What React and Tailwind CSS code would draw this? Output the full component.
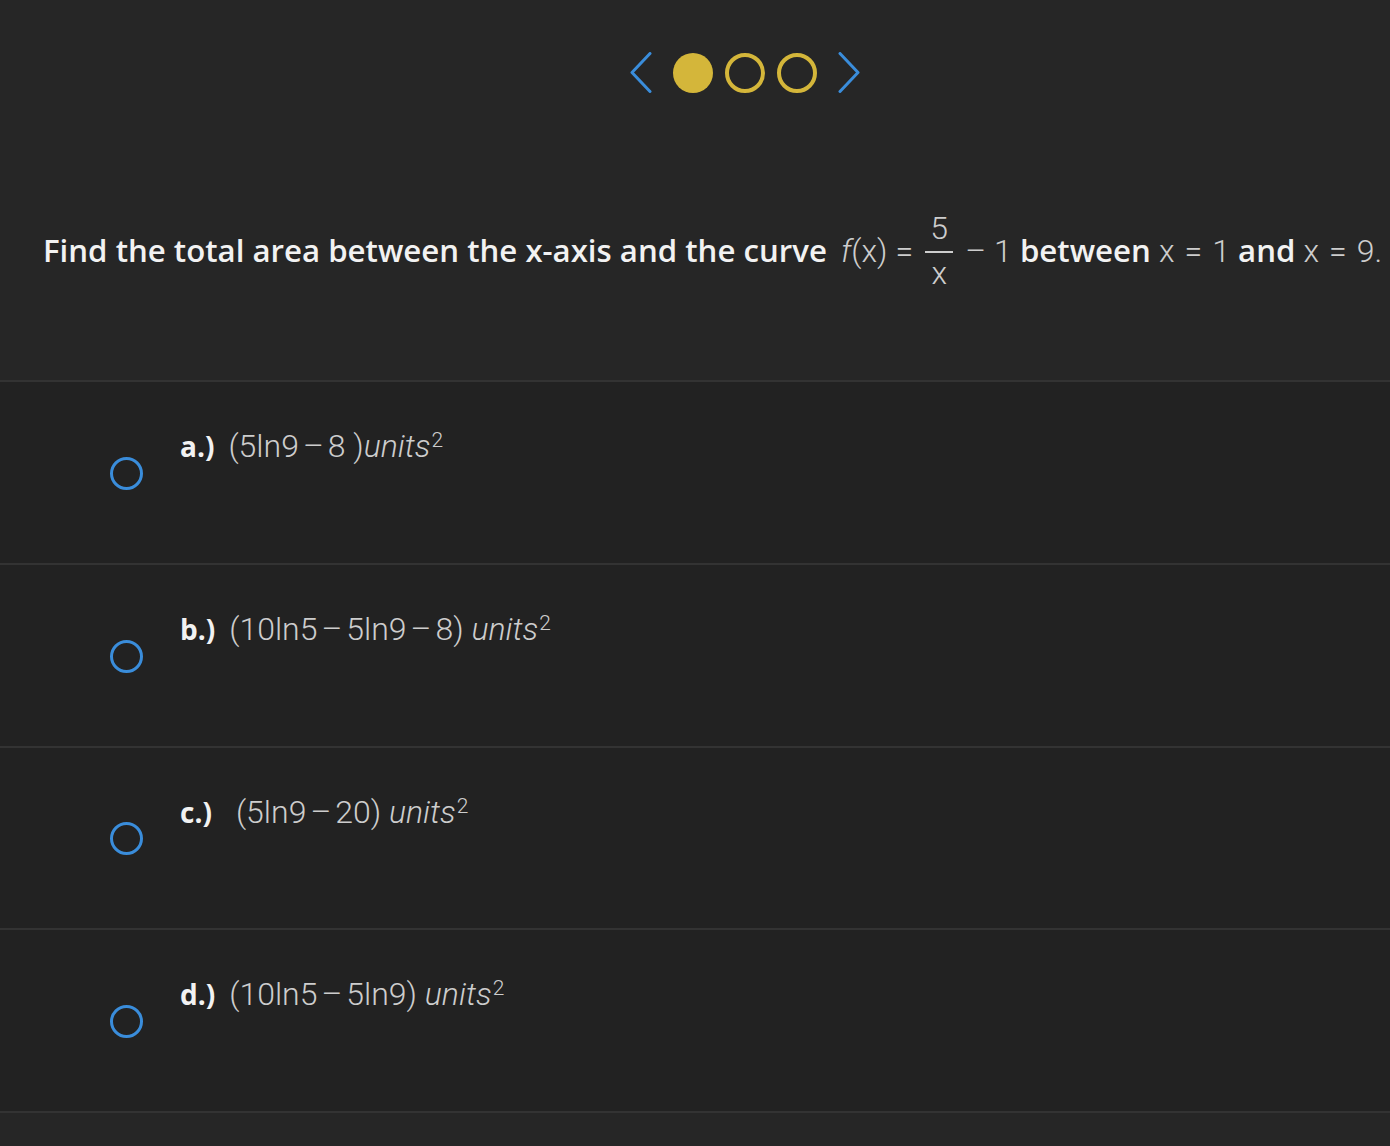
import React from "react";

const MF = { fontFamily: "Roboto, 'Liberation Sans', sans-serif" };

const M = ({ children, className = "" }) => (
  <span className={"text-[#cdcdcd] font-light " + className} style={MF}>{children}</span>
);

function Radio() {
  return <div className="w-[33px] h-[33px] rounded-full border-[3px] border-[#3a8ddb]" />;
}

function Option({ label, children }) {
  return (
    <div className="h-[182.75px] border-t-2 border-[#333333] bg-[#222222] flex items-center pl-[110px]">
      <div className="w-[70px] pt-[2px]"><Radio /></div>
      <div className="self-start pt-[48px] flex items-baseline leading-none">
        <span className="font-bold text-[#f2f2f2] mr-[14px] text-[28px]" style={{ fontFamily: "'Open Sans', sans-serif" }}>{label}</span>
        <M className="text-[32px]">{children}</M>
      </div>
    </div>
  );
}

const Sup = () => <sup className="text-[21px] relative -top-[10px] ml-[1px] not-italic">2</sup>;
const Minus = ({ w = "mx-[4px]" }) => <span className={w}>–</span>;

export default function App() {
  return (
    <div className="min-h-screen bg-[#262626]" style={{ fontFamily: "'Open Sans', Lato, sans-serif" }}>
      <div className="h-[380px] flex flex-col">
        <div className="pt-[52px] flex justify-center items-center pl-[100px]">
          <div className="flex items-center">
            <svg width="22" height="41" viewBox="0 0 22 41" className="mr-[21px]">
              <polyline points="20,1.5 2,20.5 20,39.5" fill="none" stroke="#3a8ddb" strokeWidth="3" strokeLinecap="round" strokeLinejoin="round" />
            </svg>
            <div className="w-[40px] h-[40px] rounded-full bg-[#d4b63a]" />
            <div className="w-[40px] h-[40px] rounded-full border-4 border-[#d4b63a] ml-[12px]" />
            <div className="w-[40px] h-[40px] rounded-full border-4 border-[#d4b63a] ml-[12px]" />
            <svg width="22" height="41" viewBox="0 0 22 41" className="ml-[21px]">
              <polyline points="2,1.5 20,20.5 2,39.5" fill="none" stroke="#3a8ddb" strokeWidth="3" strokeLinecap="round" strokeLinejoin="round" />
            </svg>
          </div>
        </div>
        <div className="mt-[119px] pl-[43px] flex items-center text-[31.2px] text-[#f2f2f2] font-semibold whitespace-nowrap">
          <span>Find the total area between the x-axis and the curve&nbsp;</span>
          <M className="text-[32px] flex items-center ml-[6px]">
            <span className="italic">f</span><span>(x)</span>
            <span className="mx-[8px]">=</span>
            <span className="inline-flex flex-col items-center mx-[4px] leading-none">
              <span className="pb-[7px]">5</span>
              <span className="w-[28px] h-[2px] bg-[#cdcdcd]" />
              <span className="pt-[4px]">x</span>
            </span>
            <Minus w="mx-[8px]" />
            <span>1</span>
          </M>
          <span>&nbsp;between&nbsp;</span>
          <M className="text-[32px]">x<span className="mx-[10px]">=</span>1</M>
          <span>&nbsp;and&nbsp;</span>
          <M className="text-[32px]">x<span className="mx-[10px]">=</span>9.</M>
        </div>
      </div>
      <Option label="a.)">(5ln9<Minus />8 )<span className="italic">units</span><Sup /></Option>
      <Option label="b.)">(10ln5<Minus />5ln9<Minus />8) <span className="italic">units</span><Sup /></Option>
      <Option label="c.)"><span className="ml-[10px]">(5ln9<Minus />20) </span><span className="italic">units</span><Sup /></Option>
      <Option label="d.)">(10ln5<Minus />5ln9) <span className="italic">units</span><Sup /></Option>
      <div className="border-t-2 border-[#333333] h-[35px]" />
    </div>
  );
}
